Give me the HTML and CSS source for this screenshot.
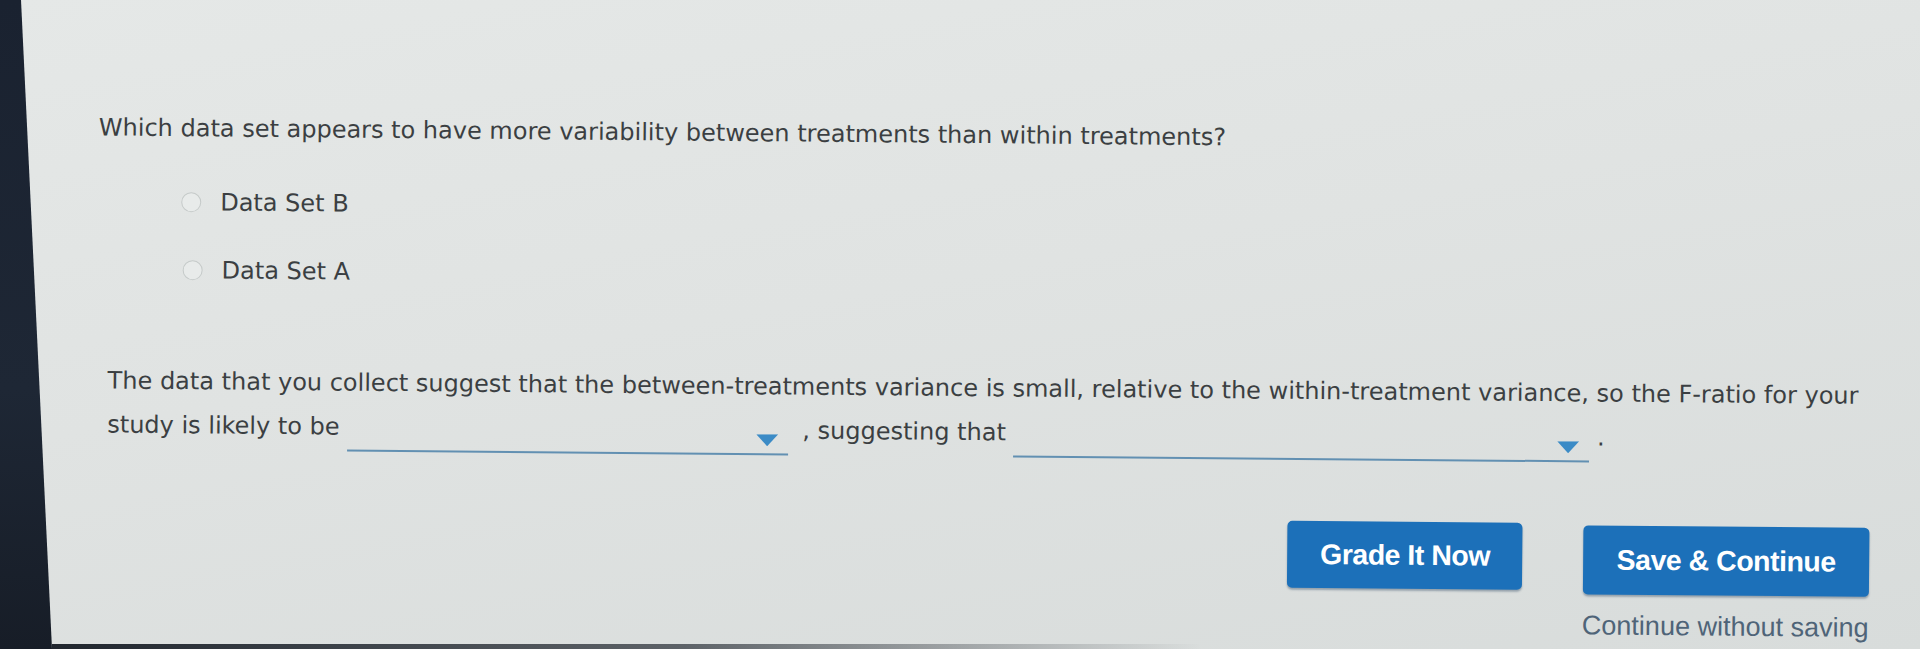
FILE: index.html
```html
<!DOCTYPE html>
<html lang="en">
<head>
<meta charset="utf-8">
<title>Question</title>
<link rel="stylesheet" href="styles.css">
</head>
<body>
<div class="bezel"></div>
<main class="screen">
  <div class="content">
    <p class="question">Which data set appears to have more variability between treatments than within treatments?</p>
    <div class="options">
      <label class="option"><span class="radio"></span><span class="opt-label">Data Set B</span></label>
      <label class="option option-a"><span class="radio"></span><span class="opt-label">Data Set A</span></label>
    </div>
    <p class="statement"><span class="line">The data that you collect suggest that the between-treatments variance is small, relative to the within-treatment variance, so the F-ratio for your</span><br>study is likely to be <span class="dd dd-1"><svg class="arrow" viewBox="0 0 22 12" width="22" height="12"><path d="M0 0 H22 L11 12 Z"/></svg></span>, suggesting that <span class="dd dd-2"><svg class="arrow" viewBox="0 0 22 12" width="22" height="12"><path d="M0 0 H22 L11 12 Z"/></svg></span> .</p>
    <div class="actions">
      <button class="btn btn-grade" type="button">Grade It Now</button>
      <div class="save-col">
        <button class="btn btn-save" type="button">Save &amp; Continue</button>
        <a class="link" href="#">Continue without saving</a>
      </div>
    </div>
  </div>
  <div class="bottom-edge"></div>
</main>
</body>
</html>
```
FILE: styles.css
```css
html, body {
  margin: 0;
  padding: 0;
}
body {
  width: 1920px;
  height: 649px;
  overflow: hidden;
  display: flex;
  background: linear-gradient(170deg, #e5e8e7 0%, #e0e3e2 45%, #d8dcdb 100%);
  font-family: "DejaVu Sans", Verdana, sans-serif;
  color: #3b3f42;
}
.bezel {
  flex: 0 0 52px;
  height: 649px;
  background: linear-gradient(to bottom, #1a2230, #1e2735 60%, #171d27);
  clip-path: polygon(0 0, 21px 0, 52px 100%, 0 100%);
}
.screen {
  flex: 1;
  position: relative;
  height: 649px;
}
.content {
  padding: 112px 46px 0 48px;
  transform: rotate(0.5deg);
  transform-origin: 0 0;
}
.question {
  margin: 0;
  font-size: 24px;
  line-height: 30px;
  white-space: nowrap;
}
.options {
  margin-top: 44px;
  padding-left: 83px;
  display: flex;
  flex-direction: column;
  gap: 38px;
}
.option {
  display: flex;
  align-items: center;
  height: 30px;
  font-size: 24px;
}
.option-a {
  padding-left: 2px;
}
.radio {
  width: 20px;
  height: 20px;
  box-sizing: border-box;
  border: 1.5px solid #c5cac9;
  border-radius: 50%;
  background: #e8ebea;
  flex: none;
}
.opt-label {
  margin-left: 19px;
}
.statement {
  margin: 79px 0 0 11px;
  font-size: 24px;
  line-height: 34px;
  white-space: nowrap;
}
.dd {
  display: inline-block;
  overflow: hidden;
  height: 52px;
  box-sizing: border-box;
  border-bottom: 2.5px solid #6290b2;
  vertical-align: -17px;
}
.dd-1 {
  width: 441px;
  margin-right: 14px;
}
.dd-2 {
  width: 576px;
}
.arrow {
  display: block;
  margin: 31px 10px 0 auto;
  fill: #3b8bc6;
}
.actions {
  margin-top: 61px;
  display: flex;
  justify-content: flex-end;
  align-items: flex-start;
  gap: 60px;
}
.btn {
  border: none;
  border-radius: 5px;
  background: #1c70b9;
  color: #ffffff;
  font-family: "Liberation Sans", Arial, sans-serif;
  font-weight: bold;
  font-size: 28.5px;
  letter-spacing: -0.5px;
  box-shadow: 0 2px 2px rgba(20, 50, 80, 0.35);
  padding: 0;
}
.btn-grade {
  width: 235px;
  height: 67px;
}
.save-col {
  display: flex;
  flex-direction: column;
  align-items: flex-end;
  margin-top: 2px;
}
.btn-save {
  width: 286px;
  height: 69px;
}
.link {
  margin-top: 15px;
  font-family: "Liberation Sans", Arial, sans-serif;
  font-size: 27px;
  line-height: 32px;
  color: #4f6478;
  text-decoration: none;
}
.bottom-edge {
  position: absolute;
  left: 0;
  bottom: 0;
  width: 1150px;
  height: 5px;
  background: linear-gradient(to right, #20262e 0%, rgba(40, 46, 54, 0.7) 55%, rgba(40, 46, 54, 0) 100%);
}
```
